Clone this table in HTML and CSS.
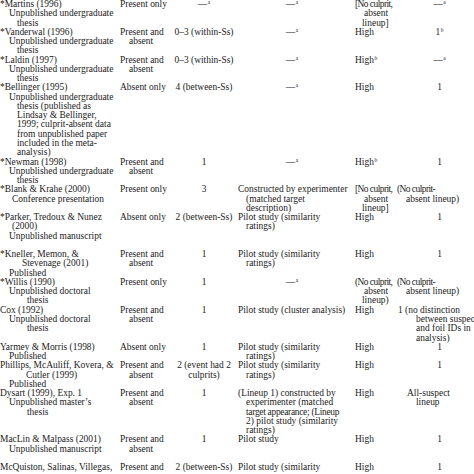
FILE: index.html
```html
<!DOCTYPE html>
<html>
<head>
<meta charset="utf-8">
<link rel="stylesheet" href="styles.css">
</head>
<body>
<div class="table">
  <div class="row">
    <div class="c c1"><span class="l">*Martins (1996)</span><span class="l i9">Unpublished undergraduate</span><span class="l i17">thesis</span></div>
    <div class="c c2"><span class="l">Present only</span></div>
    <div class="c c3"><span class="l">—<sup class="s">a</sup></span></div>
    <div class="c c4 mid"><span class="l">—<sup class="s">a</sup></span></div>
    <div class="c c5"><span class="l tight">[No culprit,</span><span class="l i9">absent</span><span class="l i7">lineup]</span></div>
    <div class="c c6 mid"><span class="l">—<sup class="s">a</sup></span></div>
  </div>
  <div class="row">
    <div class="c c1"><span class="l">*Vanderwal (1996)</span><span class="l i9">Unpublished undergraduate</span><span class="l i17">thesis</span></div>
    <div class="c c2"><span class="l">Present and</span><span class="l i9">absent</span></div>
    <div class="c c3"><span class="l">0–3 (within-Ss)</span></div>
    <div class="c c4 mid"><span class="l">—<sup class="s">a</sup></span></div>
    <div class="c c5"><span class="l">High</span></div>
    <div class="c c6 mid"><span class="l">1<sup class="s">b</sup></span></div>
  </div>
  <div class="row">
    <div class="c c1"><span class="l">*Laldin (1997)</span><span class="l i9">Unpublished undergraduate</span><span class="l i17">thesis</span></div>
    <div class="c c2"><span class="l">Present and</span><span class="l i9">absent</span></div>
    <div class="c c3"><span class="l">0–3 (within-Ss)</span></div>
    <div class="c c4 mid"><span class="l">—<sup class="s">a</sup></span></div>
    <div class="c c5"><span class="l">High<sup class="s">b</sup></span></div>
    <div class="c c6 mid"><span class="l">—<sup class="s">a</sup></span></div>
  </div>
  <div class="row">
    <div class="c c1"><span class="l">*Bellinger (1995)</span><span class="l i9">Unpublished undergraduate</span><span class="l i17">thesis (published as</span><span class="l i17">Lindsay &amp; Bellinger,</span><span class="l i17">1999; culprit-absent data</span><span class="l i17">from unpublished paper</span><span class="l i17">included in the meta-</span><span class="l i17">analysis)</span></div>
    <div class="c c2"><span class="l">Absent only</span></div>
    <div class="c c3"><span class="l">4 (between-Ss)</span></div>
    <div class="c c4 mid"><span class="l">—<sup class="s">a</sup></span></div>
    <div class="c c5"><span class="l">High</span></div>
    <div class="c c6 mid"><span class="l">1</span></div>
  </div>
  <div class="row">
    <div class="c c1"><span class="l">*Newman (1998)</span><span class="l i9">Unpublished undergraduate</span><span class="l i17">thesis</span></div>
    <div class="c c2"><span class="l">Present and</span><span class="l i9">absent</span></div>
    <div class="c c3"><span class="l">1</span></div>
    <div class="c c4 mid"><span class="l">—<sup class="s">a</sup></span></div>
    <div class="c c5"><span class="l">High<sup class="s">b</sup></span></div>
    <div class="c c6 mid"><span class="l">1</span></div>
  </div>
  <div class="row">
    <div class="c c1"><span class="l">*Blank &amp; Krahe (2000)</span><span class="l i12">Conference presentation</span></div>
    <div class="c c2"><span class="l">Present only</span></div>
    <div class="c c3"><span class="l">3</span></div>
    <div class="c c4"><span class="l">Constructed by experimenter</span><span class="l i8">(matched target</span><span class="l i8">description)</span></div>
    <div class="c c5"><span class="l tight">[No culprit,</span><span class="l i9">absent</span><span class="l i7">lineup]</span></div>
    <div class="c c6"><span class="l tight">(No culprit-</span><span class="l i9">absent lineup)</span></div>
  </div>
  <div class="row pad">
    <div class="c c1"><span class="l">*Parker, Tredoux &amp; Nunez</span><span class="l i12">(2000)</span><span class="l i9">Unpublished manuscript</span></div>
    <div class="c c2"><span class="l">Absent only</span></div>
    <div class="c c3"><span class="l">2 (between-Ss)</span></div>
    <div class="c c4"><span class="l">Pilot study (similarity</span><span class="l i8">ratings)</span></div>
    <div class="c c5"><span class="l">High</span></div>
    <div class="c c6 mid"><span class="l">1</span></div>
  </div>
  <div class="row">
    <div class="c c1"><span class="l">*Kneller, Memon, &amp;</span><span class="l i22">Stevenage (2001)</span><span class="l i9">Published</span></div>
    <div class="c c2"><span class="l">Present and</span><span class="l i9">absent</span></div>
    <div class="c c3"><span class="l">1</span></div>
    <div class="c c4"><span class="l">Pilot study (similarity</span><span class="l i8">ratings)</span></div>
    <div class="c c5"><span class="l">High</span></div>
    <div class="c c6 mid"><span class="l">1</span></div>
  </div>
  <div class="row">
    <div class="c c1"><span class="l">*Willis (1990)</span><span class="l i9">Unpublished doctoral</span><span class="l i27">thesis</span></div>
    <div class="c c2"><span class="l">Present only</span></div>
    <div class="c c3"><span class="l">1</span></div>
    <div class="c c4 mid"><span class="l">—<sup class="s">a</sup></span></div>
    <div class="c c5"><span class="l tight">(No culprit,</span><span class="l i9">absent</span><span class="l i7">lineup)</span></div>
    <div class="c c6"><span class="l tight">(No culprit-</span><span class="l i9">absent lineup)</span></div>
  </div>
  <div class="row">
    <div class="c c1"><span class="l">Cox (1992)</span><span class="l i9">Unpublished doctoral</span><span class="l i27">thesis</span></div>
    <div class="c c2"><span class="l">Present and</span><span class="l i9">absent</span></div>
    <div class="c c3"><span class="l">1</span></div>
    <div class="c c4"><span class="l">Pilot study (cluster analysis)</span></div>
    <div class="c c5"><span class="l">High</span></div>
    <div class="c c6"><span class="l i1">1 (no distinction</span><span class="l i19">between suspect</span><span class="l i19">and foil IDs in</span><span class="l i19">analysis)</span></div>
  </div>
  <div class="row">
    <div class="c c1"><span class="l">Yarmey &amp; Morris (1998)</span><span class="l i9">Published</span></div>
    <div class="c c2"><span class="l">Absent only</span></div>
    <div class="c c3"><span class="l">1</span></div>
    <div class="c c4"><span class="l">Pilot study (similarity</span><span class="l i8">ratings)</span></div>
    <div class="c c5"><span class="l">High</span></div>
    <div class="c c6 mid"><span class="l">1</span></div>
  </div>
  <div class="row">
    <div class="c c1"><span class="l">Phillips, McAuliff, Kovera, &amp;</span><span class="l i26">Cutler (1999)</span><span class="l i9">Published</span></div>
    <div class="c c2"><span class="l">Present and</span><span class="l i9">absent</span></div>
    <div class="c c3"><span class="l">2 (event had 2</span><span class="l">culprits)</span></div>
    <div class="c c4"><span class="l">Pilot study (similarity</span><span class="l i8">ratings)</span></div>
    <div class="c c5"><span class="l">High</span></div>
    <div class="c c6 mid"><span class="l">1</span></div>
  </div>
  <div class="row">
    <div class="c c1"><span class="l">Dysart (1999), Exp. 1</span><span class="l i9">Unpublished master’s</span><span class="l i27">thesis</span></div>
    <div class="c c2"><span class="l">Present and</span><span class="l i9">absent</span></div>
    <div class="c c3"><span class="l">1</span></div>
    <div class="c c4"><span class="l">(Lineup 1) constructed by</span><span class="l i8">experimenter (matched</span><span class="l i8 tight2">target appearance; (Lineup</span><span class="l i8">2) pilot study (similarity</span><span class="l i8">ratings)</span></div>
    <div class="c c5"><span class="l">High</span></div>
    <div class="c c6"><span class="l i10">All-suspect</span><span class="l i19">lineup</span></div>
  </div>
  <div class="row pad">
    <div class="c c1"><span class="l">MacLin &amp; Malpass (2001)</span><span class="l i9">Unpublished manuscript</span></div>
    <div class="c c2"><span class="l">Present and</span><span class="l i9">absent</span></div>
    <div class="c c3"><span class="l">1</span></div>
    <div class="c c4"><span class="l">Pilot study</span></div>
    <div class="c c5"><span class="l">High</span></div>
    <div class="c c6 mid"><span class="l">1</span></div>
  </div>
  <div class="row">
    <div class="c c1"><span class="l">McQuiston, Salinas, Villegas,</span></div>
    <div class="c c2"><span class="l">Present and</span></div>
    <div class="c c3"><span class="l">2 (between-Ss)</span></div>
    <div class="c c4"><span class="l">Pilot study (similarity</span></div>
    <div class="c c5"><span class="l">High</span></div>
    <div class="c c6 mid"><span class="l">1</span></div>
  </div>
</div>
</body>
</html>
```
FILE: styles.css
```css
html, body {
  margin: 0;
  padding: 0;
  background: #ffffff;
  overflow: hidden;
}
body {
  width: 474px;
  height: 474px;
}
.table {
  width: 484px;
  font-family: "Liberation Serif", "Times New Roman", serif;
  font-size: 9.45px;
  line-height: 9.26px;
  color: #222222;
}
.row {
  display: grid;
  grid-template-columns: 120px 53px 62px 120px 42px 87px;
}
.row.pad {
  padding-bottom: 9.26px;
}
.c {
  white-space: nowrap;
}
.c3 {
  text-align: center;
}
.c4 {
  padding-left: 3px;
}
.mid {
  text-align: center;
}
.c4.mid {
  padding-left: 0;
  padding-right: 6px;
}
.c6.mid {
  padding-left: 0;
  padding-right: 2px;
}
.l {
  display: block;
}
.tight {
  letter-spacing: -0.55px;
}
.tight2 {
  letter-spacing: -0.3px;
}
.i1 { padding-left: 1px; }
.i7 { padding-left: 7px; }
.i8 { padding-left: 8px; }
.i9 { padding-left: 9px; }
.i10 { padding-left: 10px; }
.i12 { padding-left: 12px; }
.i17 { padding-left: 17px; }
.i19 { padding-left: 19px; }
.i22 { padding-left: 22px; }
.i26 { padding-left: 26px; }
.i27 { padding-left: 27px; }
.s {
  font-size: 5.5px;
  line-height: 0;
  vertical-align: 3px;
  margin-left: 0.5px;
}
```
